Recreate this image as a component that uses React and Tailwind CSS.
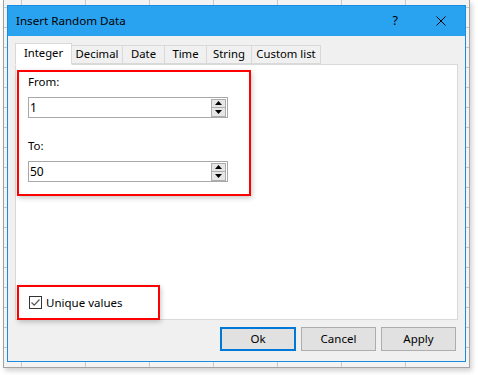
import React from "react";

const FONT = "font-['Noto_Sans','Open_Sans',sans-serif]";

const TABS = [
  { label: "Integer", w: "w-[57px]", active: true },
  { label: "Decimal", w: "w-[52px]" },
  { label: "Date", w: "w-[43px]" },
  { label: "Time", w: "w-[43px]" },
  { label: "String", w: "w-[46px]" },
  { label: "Custom list", w: "w-[70px]" },
];

function Spinner() {
  return (
    <div className="flex flex-col w-[15px] h-[18px]">
      <div className="flex-1 flex items-center justify-center bg-[#e6e6e6] border border-[#adadad]">
        <svg viewBox="0 0 7 4" className="w-[7px] h-[4px]">
          <path d="M0 4 L3.5 0 L7 4 Z" fill="#000" />
        </svg>
      </div>
      <div className="flex-1 flex items-center justify-center bg-[#e6e6e6] border border-t-0 border-[#adadad]">
        <svg viewBox="0 0 7 4" className="w-[7px] h-[4px]">
          <path d="M0 0 L7 0 L3.5 4 Z" fill="#000" />
        </svg>
      </div>
    </div>
  );
}

function NumberField({ value }) {
  return (
    <div className="flex items-center w-[200px] h-[21px] bg-white border border-[#a8a8a8] pl-[1px] pr-px">
      <span className="flex-1 text-[12px] leading-none">{value}</span>
      <Spinner />
    </div>
  );
}

export default function App() {
  return (
    <div className={"w-[478px] h-[375px] bg-white overflow-hidden text-black " + FONT}>
      {/* spreadsheet behind the dialog */}
      <div
        className={
          "ml-[3px] w-[467px] h-[368px] border-x border-b border-[#a3a3a3] pt-[5px] pl-[3px] " +
          "bg-[#f3f3f3] bg-[linear-gradient(to_right,#c8c8c8_1px,transparent_1px),linear-gradient(to_bottom,#c8c8c8_1px,transparent_1px)] " +
          "bg-[size:64px_20px] bg-[position:17px_7px] shadow-[2px_3px_5px_rgba(0,0,0,0.18)]"
        }
      >
        {/* dialog */}
        <div className="w-[459px] h-[357px] border border-[#1a8ce0] bg-[#f0f0f0] flex flex-col">
          {/* title bar */}
          <div className="h-[30px] bg-[#29a2f0] flex items-center pl-[8px] pr-[19px]">
            <span className="flex-1 text-[11.6px]">Insert Random Data</span>
            <span className="text-[12.5px] mr-[38px]">?</span>
            <svg viewBox="0 0 10 10" className="w-[10px] h-[10px]" fill="none" stroke="#000" strokeWidth="1">
              <path d="M0.5 0.5 L9.5 9.5 M9.5 0.5 L0.5 9.5" />
            </svg>
          </div>

          <div className="flex-1 flex flex-col px-[7px] pt-[7px] pb-[10px]">
            {/* tabs */}
            <div className="flex items-end h-[21px]">
              {TABS.map((t, i) => (
                <div
                  key={t.label}
                  className={
                    "flex items-center justify-center text-[11.3px] border border-[#d9d9d9] " +
                    t.w +
                    (i > 0 ? " -ml-px" : "") +
                    (t.active
                      ? " h-[22px] -mb-px bg-white border-b-white relative z-10 pb-[2px]"
                      : " h-[19px] bg-[#f0f0f0]")
                  }
                >
                  {t.label}
                </div>
              ))}
            </div>

            {/* tab panel */}
            <div className="h-[256px] bg-white border border-[#d9d9d9] flex flex-col pl-px pt-[5px]">
              <div className="w-[234px] h-[126px] border-2 border-[#ff0000] shadow-[1px_2px_5px_rgba(0,0,0,0.22)] pl-[9px] pt-[2px] flex flex-col">
                <div className="h-[16px] text-[11.5px] leading-[16px]">From:</div>
                <div className="mt-[7px]">
                  <NumberField value="1" />
                </div>
                <div className="mt-[20px] h-[16px] text-[11.5px] leading-[16px]">To:</div>
                <div className="mt-[7px]">
                  <NumberField value="50" />
                </div>
              </div>

              <div className="mt-auto -mb-px w-[143px] h-[35px] border-2 border-[#ff0000] shadow-[1px_2px_5px_rgba(0,0,0,0.22)] pl-[10px] flex items-center gap-[4px]">
                <div className="w-[13px] h-[13px] border border-[#333] bg-white flex items-center justify-center">
                  <svg viewBox="0 0 11 11" className="w-[11px] h-[11px]" fill="none" stroke="#555" strokeWidth="1.2">
                    <path d="M1.5 5.5 L4.2 8.2 L9.5 2.5" />
                  </svg>
                </div>
                <span className="text-[11.5px]">Unique values</span>
              </div>
            </div>

            {/* buttons */}
            <div className="mt-[7px] flex justify-end gap-[5px] pr-[2px]">
              <button className="w-[76px] h-[24px] bg-[#e1e1e1] border-2 border-[#0078d7] text-[11.5px]">Ok</button>
              <button className="w-[75px] h-[24px] bg-[#e1e1e1] border border-[#adadad] text-[11.5px]">Cancel</button>
              <button className="w-[75px] h-[24px] bg-[#e1e1e1] border border-[#adadad] text-[11.5px]">Apply</button>
            </div>
          </div>
        </div>
      </div>
    </div>
  );
}
